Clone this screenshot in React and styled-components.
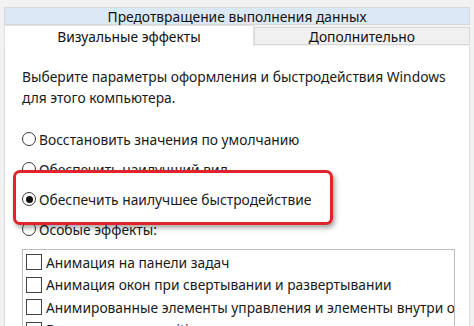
import React from "react";
import { styled, createGlobalStyle } from "styled-components";

const GlobalStyle = createGlobalStyle`
  html, body {
    margin: 0;
    padding: 0;
    background: #f2f2f2;
    overflow: hidden;
  }
  body {
    font-family: "Noto Sans", "Open Sans", sans-serif;
    color: #1a1a1a;
  }
`;

const Window = styled.div`
  width: 474px;
  height: 326px;
  padding: 8px 4px 0 4px;
  box-sizing: border-box;
  display: flex;
  flex-direction: column;
  overflow: hidden;
`;

const TabRow = styled.div`
  display: flex;
  height: ${(p) => p.$h}px;
`;

const Tab = styled.div`
  flex: ${(p) => p.$flex || 1};
  display: flex;
  align-items: center;
  justify-content: center;
  font-size: 13.8px;
  color: #111;
  box-sizing: border-box;
  background: ${(p) =>
    p.$active ? "#ffffff" : p.$blue ? "#dbe8f6" : "#f0f0f0"};
  border: 1px solid ${(p) => (p.$active ? "#e2e2e2" : "#d8d8d8")};
  border-bottom: ${(p) => (p.$active ? "none" : "1px solid #d8d8d8")};
  padding-top: ${(p) => (p.$active ? "0" : "1px")};
  align-self: ${(p) => (p.$active ? "stretch" : "flex-end")};
  height: ${(p) => (p.$active ? "100%" : "18px")};
  margin-bottom: ${(p) => (p.$active || p.$blue ? "0" : "1px")};
`;

const Panel = styled.div`
  flex: 1;
  min-height: 0;
  background: #fff;
  border-left: 1px solid #dcdcdc;
  border-right: 1px solid #dcdcdc;
  padding: 20px 0 0 17px;
  display: flex;
  flex-direction: column;
`;

const Intro = styled.p`
  margin: 0;
  font-size: 13.8px;
  line-height: 21px;
  color: #1a1a1a;
`;

const Options = styled.div`
  display: flex;
  flex-direction: column;
  gap: 10px;
  margin-top: 21px;
`;

const RadioRow = styled.div`
  position: relative;
  display: flex;
  align-items: center;
  gap: 3px;
  height: 20px;
  font-size: 13.8px;
  white-space: nowrap;
`;

const RadioDot = styled.span`
  flex: none;
  width: 14px;
  height: 14px;
  border-radius: 50%;
  border: 1px solid #3a3a3a;
  box-sizing: border-box;
  background: #fff;
  display: inline-flex;
  align-items: center;
  justify-content: center;
  &::after {
    content: "";
    width: 7px;
    height: 7px;
    border-radius: 50%;
    background: ${(p) => (p.$checked ? "#111" : "transparent")};
  }
`;

const Highlighted = styled.div`
  position: relative;
  &::before {
    content: "";
    position: absolute;
    left: -9px;
    width: 320px;
    top: -19px;
    bottom: -16px;
    box-sizing: border-box;
    background: #fff;
    border: 3px solid #e1242c;
    border-radius: 7px;
    box-shadow: 2px 3px 5px rgba(0, 0, 0, 0.35);
    z-index: 1;
  }
  & > * {
    position: relative;
    z-index: 2;
  }
`;

const ListBox = styled.div`
  margin-top: 10px;
  width: 433px;
  flex: 1;
  min-height: 0;
  border: 1px solid #bdbdbd;
  border-bottom: none;
  padding: 1px 0 0 3px;
  display: flex;
  flex-direction: column;
  overflow: hidden;
  box-sizing: border-box;
`;

const CheckRow = styled.div`
  display: flex;
  align-items: center;
  gap: 4px;
  height: 22.5px;
  flex: none;
  font-size: 13.8px;
  white-space: nowrap;
`;

const Box = styled.span`
  flex: none;
  width: 16px;
  height: 16px;
  border: 1px solid #444;
  box-sizing: border-box;
  background: #fff;
`;

function Radio({ checked, children }) {
  return (
    <RadioRow>
      <RadioDot $checked={checked} />
      <span>{children}</span>
    </RadioRow>
  );
}

function Check({ children }) {
  return (
    <CheckRow>
      <Box />
      <span>{children}</span>
    </CheckRow>
  );
}

export default function App() {
  return (
    <>
      <GlobalStyle />
      <Window>
        <TabRow $h={17}>
          <Tab $blue>Предотвращение выполнения данных</Tab>
        </TabRow>
        <TabRow $h={21}>
          <Tab $active $flex={250}>
            Визуальные эффекты
          </Tab>
          <Tab $flex={216}>Дополнительно</Tab>
        </TabRow>
        <Panel>
          <Intro>
            Выберите параметры оформления и быстродействия Windows
            <br />
            для этого компьютера.
          </Intro>
          <Options>
            <Radio>Восстановить значения по умолчанию</Radio>
            <Radio>Обеспечить наилучший вид</Radio>
            <Highlighted>
              <Radio checked>Обеспечить наилучшее быстродействие</Radio>
            </Highlighted>
            <Radio>Особые эффекты:</Radio>
          </Options>
          <ListBox>
            <Check>Анимация на панели задач</Check>
            <Check>Анимация окон при свертывании и развертывании</Check>
            <Check>Анимированные элементы управления и элементы внутри окна</Check>
            <Check>Включение composition</Check>
          </ListBox>
        </Panel>
      </Window>
    </>
  );
}
